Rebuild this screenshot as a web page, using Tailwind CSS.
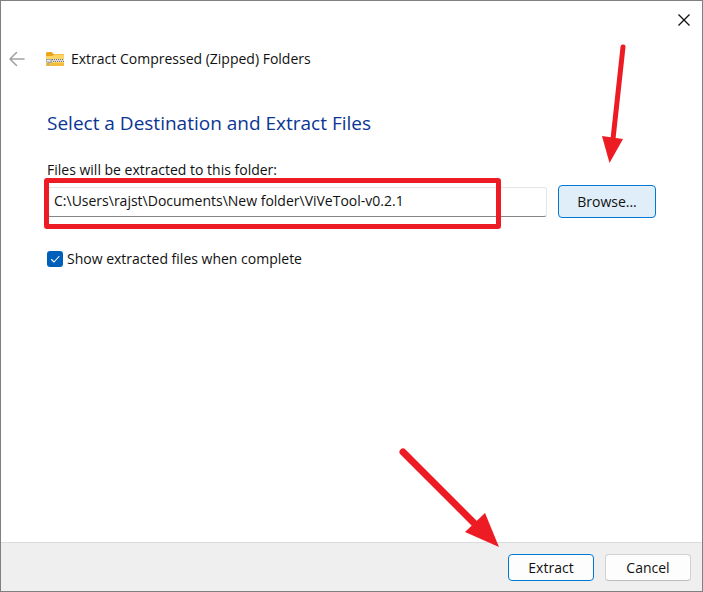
<!DOCTYPE html>
<html lang="en">
<head>
<meta charset="utf-8">
<meta name="viewport" content="width=device-width, initial-scale=1">
<title>Extract Compressed (Zipped) Folders</title>
<script src="https://cdn.jsdelivr.net/npm/@tailwindcss/browser@4"></script>
</head>
<body class="font-['Open_Sans','Noto_Sans',sans-serif] text-sm text-[#111]">
<div class="flex min-h-screen flex-col overflow-hidden border border-[#808080] bg-white">
  <div class="flex h-[37px] justify-end">
    <button type="button" aria-label="Close" class="flex w-9 items-center justify-center">
      <svg class="size-3" viewBox="0 0 12 12" fill="none" stroke="#111" stroke-width="1.3"><path d="M0.5 0.5 11.5 11.5M11.5 0.5 0.5 11.5"/></svg>
    </button>
  </div>
  <header class="flex h-[42px] items-center pl-2">
    <button type="button" aria-label="Back" class="mr-5 flex items-center">
      <svg class="h-4 w-4" viewBox="0 0 16 16" fill="none" stroke="#a3a3a3" stroke-width="1.6" stroke-linecap="round" stroke-linejoin="round"><path d="M15 8H1M7.5 1.5 1 8l6.500 6.500"/></svg>
    </button>
    <svg class="mr-1.5 h-5 w-5" viewBox="0 0 20 20" aria-hidden="true">
      <path d="M1 4.500Q1 3 2.500 3h4.200L8.500 5H18q1 0 1 1v5H1z" fill="#eaa51b"/>
      <path d="M1 7h6.500L9 5.500h9q1 0 1 1V16q0 1-1 1H2q-1 0-1-1z" fill="#fdd566"/>
      <path d="M1 14h18v2q0 1-1 1H2q-1 0-1-1z" fill="#f3bd3c"/>
      <path d="M7 10h12v3H7z" fill="#dcdad2"/>
      <path d="M7 10.500h12M8 12.500h11" stroke="#77746c" stroke-dasharray="1 1"/>
      <path d="M1 10h6v4H4v2.500H2.500V13H1z" fill="#a9a9a8"/>
      <path d="M2 11h3.500v1.500H2z" fill="#eee"/>
    </svg>
    <span>Extract Compressed (Zipped) Folders</span>
  </header>
  <main class="flex-1 px-[46px] pt-[29px]">
    <h1 class="text-[19px] leading-7 text-[#0b3594]">Select a Destination and Extract Files</h1>
    <label for="dest" class="mt-[23px] block leading-5">Files will be extracted to this folder:</label>
    <div class="mt-[5px] flex items-center gap-[11px]">
      <div class="relative flex-1">
        <input id="dest" type="text" value="C:\Users\rajst\Documents\New folder\ViVeTool-v0.2.1" class="block h-[30px] w-full rounded-[3px] border border-[#e5e5e5] border-b-[#868686] px-1.5 pb-0.5 outline-none">
        <div class="pointer-events-none absolute -top-[9px] -bottom-3 -left-[3px] w-[457px] rounded-[3px] border-5 border-[#ed1c24]"></div>
      </div>
      <div class="relative">
        <button type="button" class="h-[33px] w-[98px] rounded-[4px] border border-[#0078d4] bg-[#e0eef9]">Browse...</button>
        <svg class="pointer-events-none absolute bottom-full left-[42px] mb-5 h-[122px] w-8" viewBox="0 0 32 122" aria-hidden="true"><path d="M23 4 13 96" stroke="#ed1c24" stroke-width="5" stroke-linecap="round"/><path d="M2 93 23 96 9.500 120z" fill="#ed1c24"/></svg>
      </div>
    </div>
    <label class="mt-[31px] flex w-fit items-center gap-1 leading-5">
      <span class="relative flex size-4">
        <input type="checkbox" checked class="size-4 appearance-none rounded-[3px] bg-[#005fb8]">
        <svg class="pointer-events-none absolute inset-0" viewBox="0 0 16 16" fill="none" stroke="#fff" stroke-width="1.100" stroke-linecap="round" stroke-linejoin="round"><path d="M4.500 8.500 7 11l5-5.500"/></svg>
      </span>
      <span>Show extracted files when complete</span>
    </label>
  </main>
  <footer class="flex justify-end gap-[11px] border-t border-[#dcdcdc] bg-[#efefef] px-[11px] pt-[11px] pb-2.5">
    <div class="relative">
      <button type="button" class="h-[27px] w-[86px] rounded-[4px] border border-[#0078d4] bg-[#fdfdfd]">Extract</button>
      <svg class="pointer-events-none absolute right-[94px] bottom-full mb-1.5 h-[102px] w-[102px]" viewBox="0 0 102 102" aria-hidden="true"><path d="M5 6 78 79" stroke="#ed1c24" stroke-width="7" stroke-linecap="round"/><path d="M67 86 87 67 101 101z" fill="#ed1c24"/></svg>
    </div>
    <button type="button" class="h-[27px] w-[86px] rounded-[4px] border border-[#d0d0d0] border-b-[#bcbcbc] bg-[#fdfdfd]">Cancel</button>
  </footer>
</div>
</body>
</html>
